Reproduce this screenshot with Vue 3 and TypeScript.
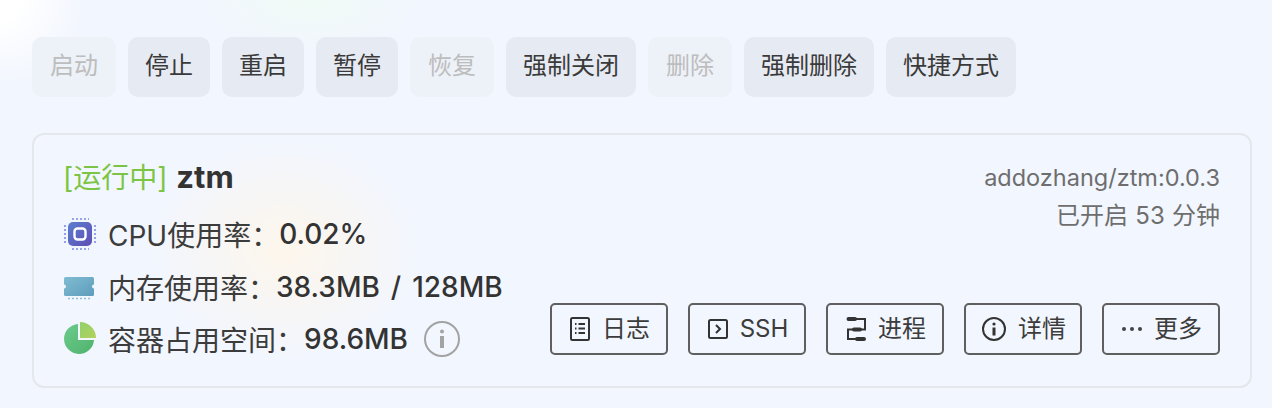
<script setup lang="ts">
interface ToolButton { label: string; disabled?: boolean }
const tools: ToolButton[] = [
  { label: '启动', disabled: true },
  { label: '停止' },
  { label: '重启' },
  { label: '暂停' },
  { label: '恢复', disabled: true },
  { label: '强制关闭' },
  { label: '删除', disabled: true },
  { label: '强制删除' },
  { label: '快捷方式' },
]
</script>

<template>
  <div class="page">
    <div class="toolbar">
      <button v-for="t in tools" :key="t.label" class="tool" :class="{ off: t.disabled }">{{ t.label }}</button>
    </div>

    <section class="card">
      <div class="left">
        <h2 class="title"><span class="status">[运行中]</span> <b>ztm</b></h2>
        <div class="row cpu">
          <svg class="ico" width="32" height="32" viewBox="0 0 32 32">
            <defs>
              <linearGradient id="cpuG" x1="0" y1="0" x2="1" y2="1">
                <stop offset="0" stop-color="#5b7ed0" />
                <stop offset="1" stop-color="#5f4db3" />
              </linearGradient>
            </defs>
            <path d="M8 1H25M8 31H25M1 7V25M31 7V25" stroke="#7d8be0" stroke-width="1.600" stroke-dasharray="2 2" fill="none" />
            <rect x="4" y="4" width="24" height="24" rx="5" fill="url(#cpuG)" />
            <rect x="10.500" y="10.500" width="11" height="11" rx="3" fill="none" stroke="#fff" stroke-width="2.400" />
          </svg>
          <span class="label">CPU使用率：</span><b class="val">0.02%</b>
        </div>
        <div class="row mem">
          <svg class="ico" width="32" height="32" viewBox="0 0 32 32">
            <defs>
              <linearGradient id="memG" x1="0" y1="0" x2="1" y2="1">
                <stop offset="0" stop-color="#80bcd2" />
                <stop offset="1" stop-color="#5e9cbc" />
              </linearGradient>
            </defs>
            <path d="M1.500 6H28.500A1.500 1.500 0 0 1 30 7.500V13.500A2 2 0 0 0 30 17.500V23.500A1.500 1.500 0 0 1 28.500 25H1.500A1.500 1.500 0 0 1 0 23.500V17.500A2 2 0 0 0 0 13.500V7.500A1.500 1.500 0 0 1 1.500 6Z" fill="url(#memG)" />
            <path d="M4 27.500H27" stroke="#8fc0d6" stroke-width="1.600" stroke-dasharray="2 2" />
          </svg>
          <span class="label">内存使用率：</span><b class="val wide">38.3MB / 128MB</b>
        </div>
        <div class="row disk">
          <svg class="ico pie" width="32" height="32" viewBox="0 0 32 32">
            <defs>
              <linearGradient id="pieG" x1="0" y1="0" x2="1" y2="1">
                <stop offset="0" stop-color="#6dcb8d" />
                <stop offset="1" stop-color="#4fb36b" />
              </linearGradient>
              <linearGradient id="sliceG" x1="0" y1="0" x2="1" y2="1">
                <stop offset="0" stop-color="#8fd06e" />
                <stop offset="1" stop-color="#b4d25a" />
              </linearGradient>
            </defs>
            <path d="M14 2V18H30A15 15 0 1 1 14 2Z" fill="url(#pieG)" />
            <path d="M16 0A16 16 0 0 1 32 16H16Z" fill="url(#sliceG)" />
          </svg>
          <span class="label">容器占用空间：</span><b class="val">98.6MB</b>
          <svg class="hint" width="36" height="36" viewBox="0 0 36 36">
            <circle cx="18" cy="18" r="17" fill="none" stroke="#a3a3a3" stroke-width="2" />
            <circle cx="18" cy="10.500" r="2" fill="#a3a3a3" />
            <path d="M18 15V27" stroke="#a3a3a3" stroke-width="4" />
          </svg>
        </div>
      </div>

      <div class="right">
        <div class="meta">
          <div class="image">addozhang/ztm:0.0.3</div>
          <div class="uptime">已开启 53 分钟</div>
        </div>
        <div class="actions">
          <button class="act">
            <svg width="20" height="24" viewBox="0 0 20 24" fill="none" stroke="#333" stroke-width="2">
              <rect x="1" y="1" width="18" height="22" rx="1.500" />
              <path d="M5 7H6.500M5 11.500H6.500M5 16H6.500M8.500 7H15M8.500 11.500H15M8.500 16H15" stroke-width="1.800" />
            </svg>
            <span>日志</span>
          </button>
          <button class="act">
            <svg width="20" height="20" viewBox="0 0 20 20" fill="none" stroke="#333" stroke-width="2">
              <rect x="1" y="1" width="18" height="18" rx="1.500" />
              <path d="M8 6L12 10L8 14" />
            </svg>
            <span>SSH</span>
          </button>
          <button class="act">
            <svg width="20" height="24" viewBox="0 0 20 24" fill="none" stroke="#333" stroke-width="2">
              <path d="M2 2H19V12.500H2V22H19" />
              <path d="M2.500 2H9M8 12.500H14M11 22H18" stroke-width="4" stroke-linecap="round" />
            </svg>
            <span>进程</span>
          </button>
          <button class="act">
            <svg width="24" height="24" viewBox="0 0 24 24" fill="none" stroke="#333" stroke-width="2">
              <circle cx="12" cy="12" r="11" />
              <circle cx="12" cy="7" r="1.600" fill="#333" stroke="none" />
              <path d="M12 10.500V18.500" stroke-width="3" />
            </svg>
            <span>详情</span>
          </button>
          <button class="act">
            <svg width="20" height="4" viewBox="0 0 20 4" fill="#444">
              <circle cx="2" cy="2" r="2" />
              <circle cx="10" cy="2" r="2" />
              <circle cx="18" cy="2" r="2" />
            </svg>
            <span>更多</span>
          </button>
        </div>
      </div>
    </section>
  </div>
</template>

<style>
html, body { margin: 0; background: #f2f6fe; }
</style>

<style scoped>
.page {
  box-sizing: border-box;
  height: 408px;
  padding: 37px 20px 0 32px;
  overflow: hidden;
  font-family: Inter, "Noto Sans CJK SC", sans-serif;
  color: #333;
  background:
    radial-gradient(ellipse 85px 85px at 0 0, #ffffff 25%, rgba(255,255,255,0) 100%),
    radial-gradient(ellipse 110px 50px at 310px 0, rgba(240,252,244,.8) 0%, rgba(240,252,244,0) 100%),
    radial-gradient(ellipse 135px 110px at 285px 250px, rgba(255,246,232,.85) 0%, rgba(255,246,232,0) 100%),
    #f2f6fe;
}
.toolbar { display: flex; gap: 12px; height: 60px; }
.tool {
  box-sizing: border-box;
  height: 60px;
  padding: 0 17px 2px;
  border: 0;
  border-radius: 10px;
  background: #e6eaf2;
  color: #3a3a3a;
  font: 24px/58px Inter, "Noto Sans CJK SC", sans-serif;
}
.tool.off { padding: 0 18px 2px; background: #edf1f8; color: #bdbdbd; }
.card {
  box-sizing: border-box;
  display: flex;
  justify-content: space-between;
  margin-top: 36px;
  height: 255px;
  padding: 22px 30px 31px 30px;
  border: 2px solid #e4e7ec;
  border-radius: 12px;
}
.title { margin: 0 0 11px -1px; font-size: 28px; line-height: 40px; font-weight: 400; height: 40px; }
.status { color: #7cc544; margin-right: 1px; }
.title b { font-weight: 700; font-size: 31px; color: #333; }
.row { display: flex; align-items: center; height: 52.500px; font-size: 28px; }
.ico { flex: none; margin-right: 12px; }
.pie { margin-top: -2px; }
.label { color: #3c3c3c; }
.val { font-weight: 500; font-size: 28px; color: #333; }
.val.wide { word-spacing: 3.500px; }
.hint { margin-left: 16px; }
.right { display: flex; flex-direction: column; justify-content: space-between; align-items: flex-end; }
.meta { text-align: right; color: #6e6e6e; font-size: 23.500px; line-height: 38px; margin-top: 2px; }
.uptime { word-spacing: 0.500px; font-size: 24px; }
.actions { display: flex; gap: 20px; }
.act {
  box-sizing: border-box;
  display: flex;
  align-items: center;
  justify-content: center;
  gap: 12px;
  width: 118px;
  height: 52px;
  padding: 0 0 0 2px;
  border: 2px solid #5f5f5f;
  border-radius: 5px;
  background: transparent;
  color: #3c3c3c;
  font: 24px/1 Inter, "Noto Sans CJK SC", sans-serif;
}
</style>
